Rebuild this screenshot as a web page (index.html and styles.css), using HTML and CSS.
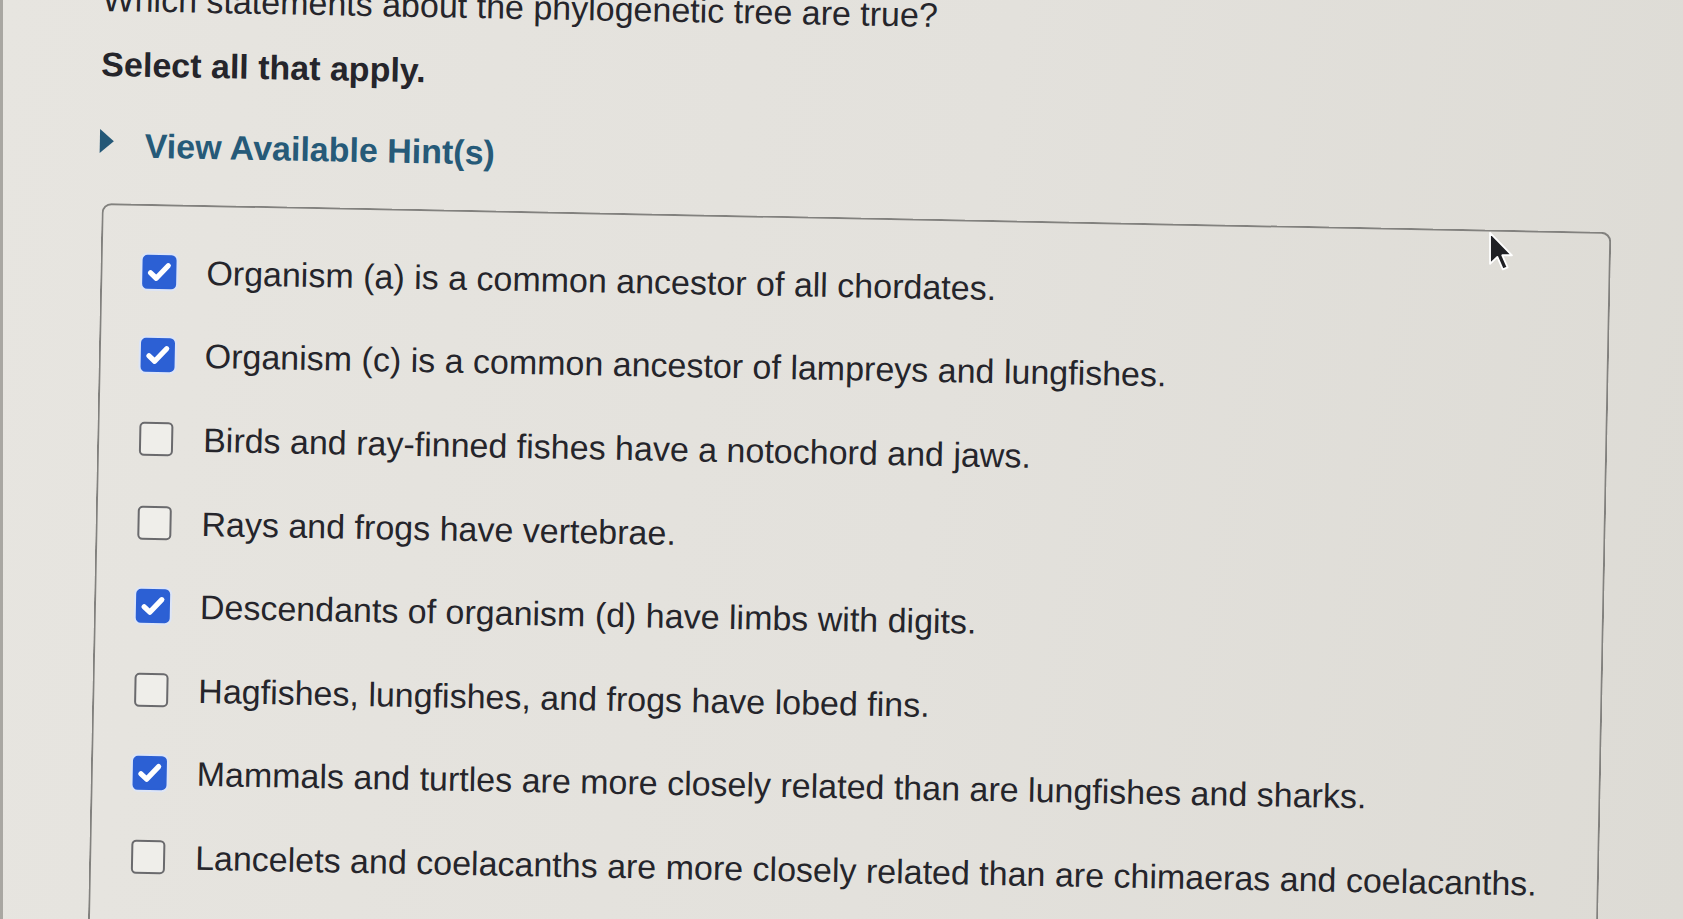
FILE: index.html
```html
<!DOCTYPE html>
<html lang="en">
<head>
<meta charset="utf-8">
<title>Phylogenetic tree question</title>
<link rel="stylesheet" href="styles.css">
</head>
<body>
<div class="page">
  <p class="question">Which statements about the phylogenetic tree are true?</p>
  <p class="instruction">Select all that apply.</p>
  <div class="hint"><span class="hint-arrow"></span><span class="hint-label">View Available Hint(s)</span></div>
  <div class="answers">
    <div class="option"><span class="box checked"><svg viewBox="0 0 24 24"><path d="M5 12.8 L9.6 17 L19 6.8"/></svg></span><span class="option-text">Organism (a) is a common ancestor of all chordates.</span></div>
    <div class="option"><span class="box checked"><svg viewBox="0 0 24 24"><path d="M5 12.8 L9.6 17 L19 6.8"/></svg></span><span class="option-text">Organism (c) is a common ancestor of lampreys and lungfishes.</span></div>
    <div class="option"><span class="box"></span><span class="option-text">Birds and ray-finned fishes have a notochord and jaws.</span></div>
    <div class="option"><span class="box"></span><span class="option-text">Rays and frogs have vertebrae.</span></div>
    <div class="option"><span class="box checked"><svg viewBox="0 0 24 24"><path d="M5 12.8 L9.6 17 L19 6.8"/></svg></span><span class="option-text">Descendants of organism (d) have limbs with digits.</span></div>
    <div class="option"><span class="box"></span><span class="option-text">Hagfishes, lungfishes, and frogs have lobed fins.</span></div>
    <div class="option"><span class="box checked"><svg viewBox="0 0 24 24"><path d="M5 12.8 L9.6 17 L19 6.8"/></svg></span><span class="option-text">Mammals and turtles are more closely related than are lungfishes and sharks.</span></div>
    <div class="option"><span class="box"></span><span class="option-text">Lancelets and coelacanths are more closely related than are chimaeras and coelacanths.</span></div>
  </div>
</div>
<svg class="cursor" viewBox="0 0 14 23"><path d="M1 1 L1 18 L5 14.2 L8 21 L10.6 19.9 L7.7 13.3 L13 13.3 Z"/></svg>
</body>
</html>
```
FILE: styles.css
```css
html, body {
  margin: 0;
  height: 100%;
  overflow: hidden;
}

body {
  box-sizing: border-box;
  border-left: 3px solid #a9a7a2;
  background: linear-gradient(100deg, #e7e5e0 0%, #e3e1dc 55%, #dddbd5 100%);
  font-family: "Liberation Sans", Arial, Helvetica, sans-serif;
  color: #25252b;
  position: relative;
}

.page {
  padding-left: 100px;
  transform: rotate(1.1deg);
  transform-origin: 0 0;
}

.question {
  margin: -23px 0 0;
  font-size: 34px;
  line-height: 40px;
}

.instruction {
  margin: 25px 0 0;
  font-size: 34px;
  line-height: 40px;
  font-weight: bold;
}

.hint {
  margin-top: 41px;
  height: 40px;
  display: flex;
  align-items: center;
  color: #265a78;
  font-size: 34px;
  font-weight: bold;
}

.hint-arrow {
  width: 0;
  height: 0;
  border-left: 14px solid #245877;
  border-top: 12px solid transparent;
  border-bottom: 12px solid transparent;
  margin-right: 31px;
  margin-bottom: 8px;
}

.answers {
  margin: 38px 0 0 3px;
  width: 1510px;
  box-sizing: border-box;
  border: 2px solid #82817e;
  border-bottom: none;
  border-radius: 10px 10px 0 0;
  padding: 24px 0 200px 40px;
}

.option {
  display: flex;
  align-items: center;
  gap: 30px;
  height: 83.6px;
  font-size: 34px;
  line-height: 40px;
}

.box {
  flex: none;
  width: 34px;
  height: 34px;
  box-sizing: border-box;
  border: 2.5px solid #6a6a6d;
  border-radius: 5px;
  background: #efeeea;
  display: flex;
  align-items: center;
  justify-content: center;
}

.box.checked {
  background: #2c60d4;
  border-color: #2c60d4;
  box-shadow: 0 0 0 2px #dde5f6;
}

.box svg {
  width: 30px;
  height: 30px;
  fill: none;
  stroke: #ffffff;
  stroke-width: 4.2;
  stroke-linecap: round;
  stroke-linejoin: round;
}

.cursor {
  position: absolute;
  left: 1485px;
  top: 231px;
  width: 26px;
  height: 42px;
  fill: #1f2024;
  stroke: #ffffff;
  stroke-width: 1;
  stroke-linejoin: round;
}
```
